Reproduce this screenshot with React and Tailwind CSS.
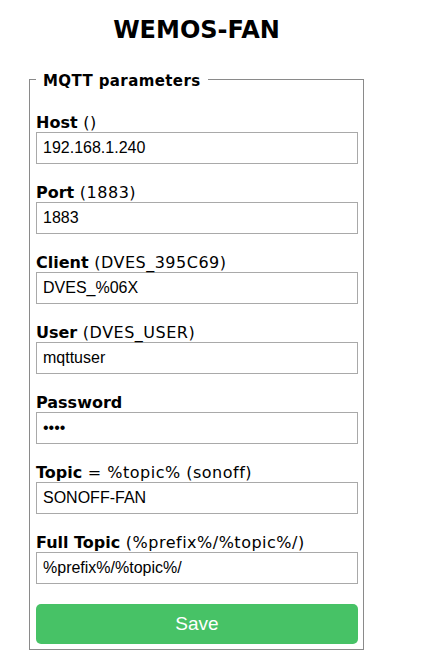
import { useState } from 'react'

const fields = [
  { label: 'Host', hint: ' ()', value: '192.168.1.240' },
  { label: 'Port', hint: ' (1883)', value: '1883' },
  { label: 'Client', hint: ' (DVES_395C69)', value: 'DVES_%06X' },
  { label: 'User', hint: ' (DVES_USER)', value: 'mqttuser' },
  { label: 'Password', hint: '', value: '1234', type: 'password' },
  { label: 'Topic', hint: ' = %topic% (sonoff)', value: 'SONOFF-FAN' },
  { label: 'Full Topic', hint: ' (%prefix%/%topic%/)', value: '%prefix%/%topic%/' },
]

function Field({ field }) {
  const [value, setValue] = useState(field.value)
  return (
    <div className="mb-[20px] last:mb-[19px]">
      <div className="h-[18px] leading-[18px] text-[16px] text-black whitespace-nowrap">
        <b>{field.label}</b>
        <span className="tracking-[0.5px]">{field.hint}</span>
      </div>
      <input
        type={field.type || 'text'}
        value={value}
        onChange={(e) => setValue(e.target.value)}
        className="block w-full h-[32px] border border-[#a9a9a9] bg-white pl-[6px] pr-[4px] text-[16px] text-black font-['Liberation_Sans',Arial,sans-serif] outline-none"
      />
    </div>
  )
}

export default function App() {
  return (
    <div className="min-h-screen bg-white font-['DejaVu_Sans',Verdana,sans-serif]">
      <div className="ml-[29px] w-[335px] pt-[16px]">
        <h2 className="text-center text-[24px] leading-[28px] font-bold text-black">WEMOS-FAN</h2>

        <fieldset className="mt-[25px] border border-[#8a8a8a] pl-[6px] pr-[5px] pt-[25px] pb-[5px]">
          <legend className="px-[7px] text-[15px] leading-[20px] font-bold text-black tracking-[0.4px]">
            <span className="relative top-[2px]">MQTT parameters</span>
          </legend>

          {fields.map((field) => (
            <Field key={field.label} field={field} />
          ))}

          <button className="block w-full h-[40px] rounded-[5px] bg-[#47c266] text-white text-[19px] font-['Liberation_Sans',Arial,sans-serif]">
            Save
          </button>
        </fieldset>
      </div>
    </div>
  )
}
